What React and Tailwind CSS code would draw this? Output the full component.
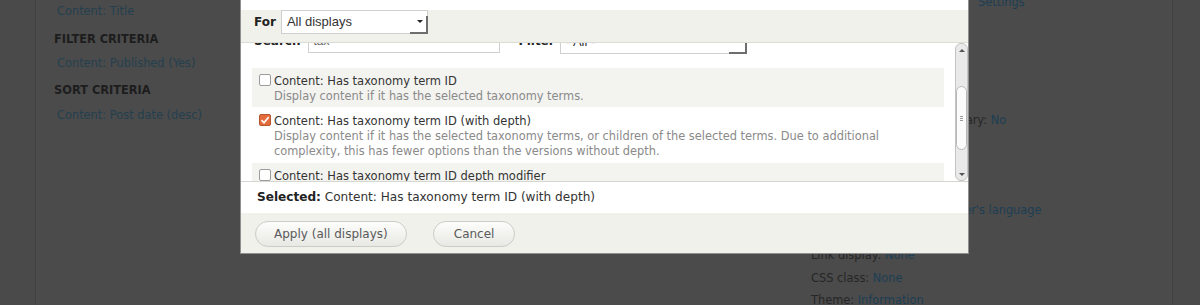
import React from "react";

const F = "font-['DejaVu_Sans',sans-serif]";

function Checkbox({ checked }) {
  if (checked) {
    return (
      <div className="w-[12px] h-[12px] mt-[1px] shrink-0 rounded-[2px] bg-[#e36b3c] border border-[#b8552f] flex items-center justify-center">
        <svg width="10" height="10" viewBox="0 0 10 10">
          <path d="M1.5 5.2 L4 7.6 L8.8 2" fill="none" stroke="#fff4ee" strokeWidth="1.8" />
        </svg>
      </div>
    );
  }
  return <div className="w-[12px] h-[12px] mt-[1px] shrink-0 rounded-[2px] bg-white border border-[#9c9c9c]" />;
}

function Item({ checked, title, desc, gray }) {
  return (
    <div className={`flex gap-[3px] pl-[7px] pt-[5px] pb-[3px] ${gray ? "bg-[#f3f3f0]" : "bg-white"}`}>
      <Checkbox checked={checked} />
      <div className="flex flex-col">
        <div className="text-[11.5px] leading-[16px] text-[#333]">{title}</div>
        {desc && <div className="text-[11.4px] leading-[15px] text-[#8a8a8a]">{desc}</div>}
      </div>
    </div>
  );
}

function FakeSelect({ text, w }) {
  return (
    <div className={`relative h-[24px] ${w} bg-white border border-[#cfcfcf] flex items-center pl-[5px] font-['Liberation_Sans',sans-serif] text-[13px] text-[#333]`}>
      {text}
      <div className="absolute right-[-1px] bottom-[-1px] w-[18px] h-[18px] border-r-2 border-b-2 border-[#6e6e6e]" />
      <div className="absolute right-[4px] top-[9px] w-0 h-0 border-l-[3px] border-r-[3px] border-t-[3px] border-l-transparent border-r-transparent border-t-[#222]" />
    </div>
  );
}

function Row({ label, value, link = true }) {
  return (
    <div className="h-[22.6px] leading-[22.6px] whitespace-nowrap">
      <span className="text-[#262626]">{label} </span>
      <span className={link ? "text-[#1c3e54]" : "text-[#262626]"}>{value}</span>
    </div>
  );
}

export default function App() {
  return (
    <div className={`relative w-[1200px] h-[305px] overflow-hidden bg-[#4b4b4b] ${F}`}>
      <div className="flex h-full">
        <div className="w-[36px] border-r border-[#414141] bg-[#4a4a4a]" />
        <div className="flex-1 flex justify-between">
          <div className="w-[300px] pl-[18px] pt-[3px] text-[11.4px] leading-[16px]">
            <div className="pl-[3px] text-[#24404f]">Content: Title</div>
            <div className="mt-[12px] font-bold text-[#1d1d1d]">FILTER CRITERIA</div>
            <div className="mt-[8px] pl-[3px] text-[#24404f]">Content: Published (Yes)</div>
            <div className="mt-[11px] font-bold text-[#1d1d1d]">SORT CRITERIA</div>
            <div className="mt-[9px] pl-[3px] text-[#24404f]">Content: Post date (desc)</div>
          </div>
          <div className="w-[361px] mt-[-9.3px] text-[11.4px]">
            <div className="h-[27.6px] leading-[22.6px] whitespace-nowrap">
              <span className="inline-block w-[167px] text-[#262626]">
                Exposed form style: <span className="text-[#1c3e54]">Basic</span> |
              </span>
              <span className="text-[#1c3e54]">Settings</span>
            </div>
            <div className="h-[22.6px] leading-[22.6px] font-bold text-[#1d1d1d]">OTHER</div>
            <Row label="Machine Name:" value="page" />
            <Row label="Comment:" value="No comment" />
            <Row label="Use AJAX:" value="No" />
            <Row label="Hide attachments in summary:" value="No" />
            <Row label="Hide contextual links:" value="No" />
            <Row label="Use aggregation:" value="No" />
            <Row label="Query settings:" value="Settings" />
            <Row label="Field Language:" value="Current user's language" />
            <Row label="Caching:" value="None" />
            <Row label="Link display:" value="None" />
            <Row label="CSS class:" value="None" />
            <Row label="Theme:" value="Information" />
          </div>
        </div>
        <div className="w-[28px] border-l border-[#414141] bg-[#4a4a4a]" />
      </div>

      {/* Modal dialog */}
      <div className="absolute left-[240px] top-0 w-[729px] flex flex-col border-l border-r border-b border-[#8f8f8f] bg-white">
        <div className="h-[10px] bg-white" />
        <div className="h-[33px] bg-[#f1f1ec] border-b border-[#dcdcd6] flex items-start pl-[13px]">
          <div className="h-[24px] flex items-center text-[12px] font-bold text-[#222] mr-[5px]">For</div>
          <FakeSelect text="All displays" w="w-[147px]" />
        </div>

        <div className="h-[138px] flex">
          <div className="flex-1 overflow-hidden">
            <div className="mt-[-14px]">
              <div className="flex items-start pl-[13px] h-[24px]">
                <div className="h-[24px] flex items-center text-[12px] font-bold text-[#222]">Search</div>
                <div className="ml-[8px] w-[192px] h-[24px] bg-white border border-[#cfcfcf] flex items-center pl-[4px] font-['Liberation_Sans',sans-serif] text-[12px] text-[#666]">tax</div>
                <div className="ml-[18px] h-[24px] flex items-center text-[12px] font-bold text-[#222]">Filter</div>
                <div className="ml-[5px] mt-[1px]">
                  <FakeSelect text="- All -" w="w-[187px]" />
                </div>
              </div>
              <div className="mt-[15px] ml-[11px] mr-[11px] flex flex-col gap-[1px]">
                <Item gray title="Content: Has taxonomy term ID" desc="Display content if it has the selected taxonomy terms." />
                <Item
                  checked
                  title="Content: Has taxonomy term ID (with depth)"
                  desc={
                    <>
                      Display content if it has the selected taxonomy terms, or children of the selected terms. Due to additional
                      <br />
                      complexity, this has fewer options than the versions without depth.
                    </>
                  }
                />
                <Item gray title="Content: Has taxonomy term ID depth modifier" desc="Allows the “depth” for Taxonomy: Term ID (with depth) to be modified via an additional contextual filter value." />
              </div>
            </div>
          </div>
          {/* scrollbar */}
          <div className="w-[13px] h-full border border-[#c4c4c4] rounded-[6px] bg-[#e9e9e9] flex flex-col items-center">
            <div className="h-[12px] flex items-center justify-center">
              <div className="w-0 h-0 border-l-[3px] border-r-[3px] border-b-[3px] border-l-transparent border-r-transparent border-b-[#555]" />
            </div>
            <div className="flex-1 w-full flex flex-col items-center">
              <div className="mt-[30px] w-[11px] h-[64px] rounded-[6px] bg-[#fbfbfb] border border-[#b8b8b8] flex flex-col items-center justify-center gap-[1px]">
                <div className="w-[3px] h-px bg-[#999]" />
                <div className="w-[3px] h-px bg-[#999]" />
                <div className="w-[3px] h-px bg-[#999]" />
              </div>
            </div>
            <div className="h-[12px] flex items-center justify-center">
              <div className="w-0 h-0 border-l-[3px] border-r-[3px] border-t-[3px] border-l-transparent border-r-transparent border-t-[#555]" />
            </div>
          </div>
        </div>

        <div className="h-[32px] border-t border-[#d6d6d0] bg-white flex items-center pl-[16px] text-[12.1px] text-[#333]">
          <span className="font-bold text-[#222]">Selected:</span>
          <span>&nbsp;Content: Has taxonomy term ID (with depth)</span>
        </div>

        <div className="h-[40px] bg-[#f1f1ec] flex items-start pt-[8px] pl-[14px] gap-[26px]">
          <button className="h-[26px] px-[18px] rounded-full border border-[#cdcdc8] bg-gradient-to-b from-[#fdfdfb] to-[#e8e8e4] text-[12px] text-[#5a5a5a]">
            Apply (all displays)
          </button>
          <button className="h-[26px] px-[20px] rounded-full border border-[#cdcdc8] bg-gradient-to-b from-[#fdfdfb] to-[#e8e8e4] text-[12px] text-[#5a5a5a]">
            Cancel
          </button>
        </div>
      </div>
    </div>
  );
}
